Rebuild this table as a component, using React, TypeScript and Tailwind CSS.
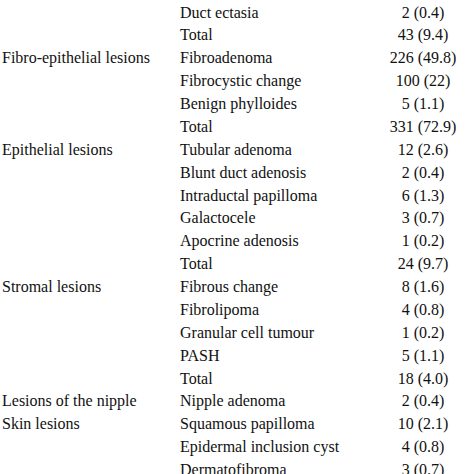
const rows: [string, string, string][] = [
  ["", "Duct ectasia", "2 (0.4)"],
  ["", "Total", "43 (9.4)"],
  ["Fibro-epithelial lesions", "Fibroadenoma", "226 (49.8)"],
  ["", "Fibrocystic change", "100 (22)"],
  ["", "Benign phylloides", "5 (1.1)"],
  ["", "Total", "331 (72.9)"],
  ["Epithelial lesions", "Tubular adenoma", "12 (2.6)"],
  ["", "Blunt duct adenosis", "2 (0.4)"],
  ["", "Intraductal papilloma", "6 (1.3)"],
  ["", "Galactocele", "3 (0.7)"],
  ["", "Apocrine adenosis", "1 (0.2)"],
  ["", "Total", "24 (9.7)"],
  ["Stromal lesions", "Fibrous change", "8 (1.6)"],
  ["", "Fibrolipoma", "4 (0.8)"],
  ["", "Granular cell tumour", "1 (0.2)"],
  ["", "PASH", "5 (1.1)"],
  ["", "Total", "18 (4.0)"],
  ["Lesions of the nipple", "Nipple adenoma", "2 (0.4)"],
  ["Skin lesions", "Squamous papilloma", "10 (2.1)"],
  ["", "Epidermal inclusion cyst", "4 (0.8)"],
  ["", "Dermatofibroma", "3 (0.7)"],
]

export default function App() {
  return (
    <div className="w-[474px] h-[474px] overflow-hidden bg-white text-[#111] font-['Liberation_Serif','Times_New_Roman',serif] text-[16px] leading-[22.88px] pt-[1.5px]">
      {rows.map(([group, lesion, count], i) => (
        <div key={i} className="grid grid-cols-[178px_190px_106px] pl-[2px] whitespace-nowrap">
          <div>{group}</div>
          <div>{lesion}</div>
          <div className="text-center">{count}</div>
        </div>
      ))}
    </div>
  )
}
